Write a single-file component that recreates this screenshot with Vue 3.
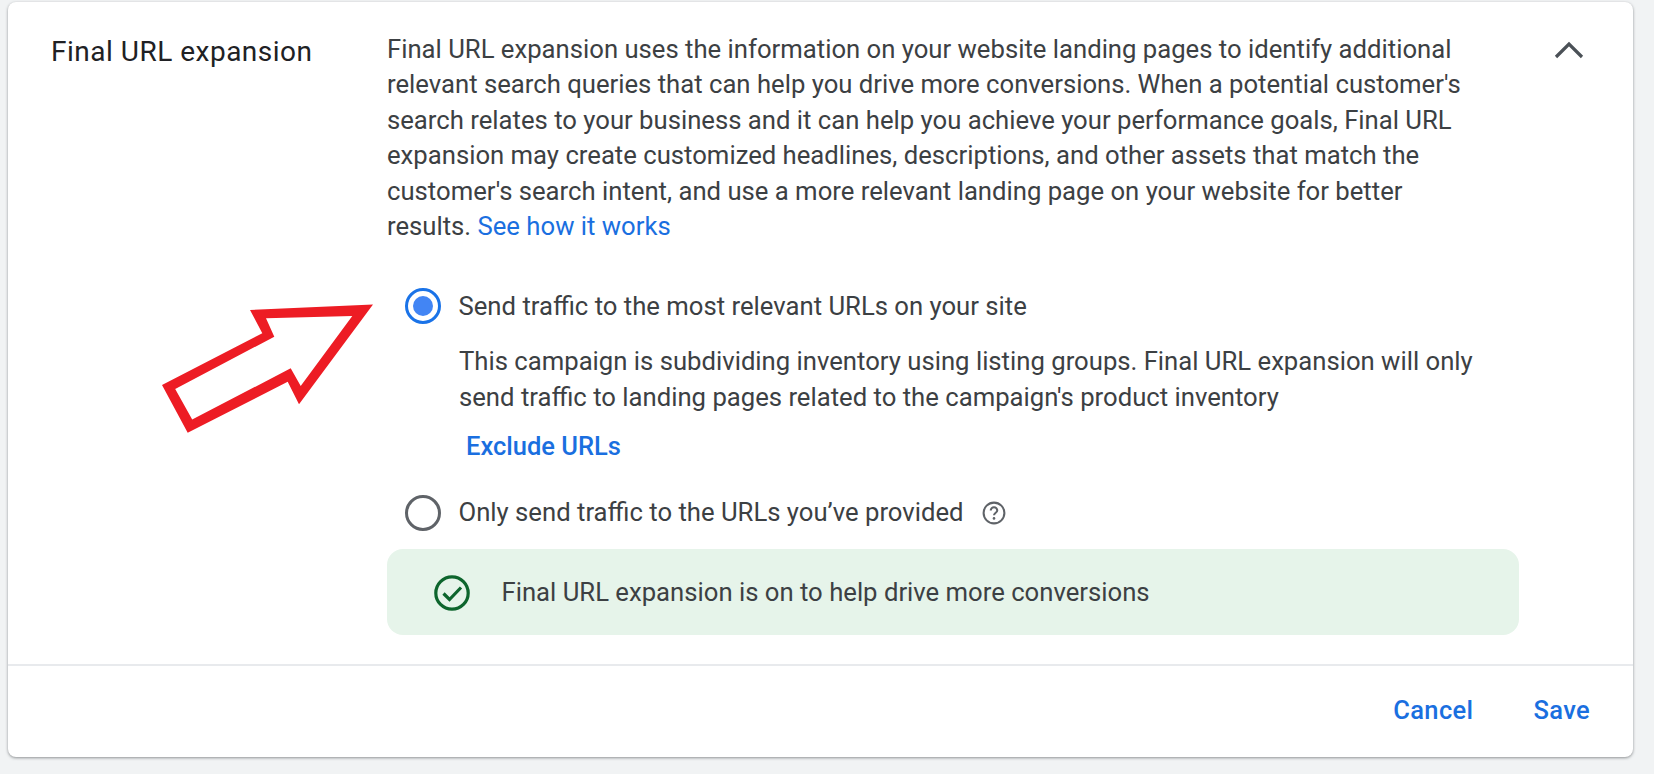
<script setup>
const intro = "Final URL expansion uses the information on your website landing pages to identify additional relevant search queries that can help you drive more conversions. When a potential customer's search relates to your business and it can help you achieve your performance goals, Final URL expansion may create customized headlines, descriptions, and other assets that match the customer's search intent, and use a more relevant landing page on your website for better results."
</script>

<template>
  <div class="page">
    <section class="card">
      <div class="body">
        <h2 class="title">Final URL expansion</h2>
        <div class="content">
          <p class="intro">{{ intro }} <a class="link">See how it works</a></p>
          <div class="option first">
            <span class="radio on"><span class="dot"></span></span>
            <span>Send traffic to the most relevant URLs on your site</span>
          </div>
          <p class="sub">This campaign is subdividing inventory using listing groups. Final URL expansion will only send traffic to landing pages related to the campaign's product inventory</p>
          <a class="exclude">Exclude URLs</a>
          <div class="option second">
            <span class="radio"></span>
            <span>Only send traffic to the URLs you’ve provided</span>
            <svg class="help" viewBox="0 0 24 24" width="26" height="26" fill="none">
              <circle cx="12" cy="12" r="9.6" stroke="#5f6368" stroke-width="1.9" />
              <path d="M9 9.7a3 3 0 0 1 6 0c0 2-3 2.2-3 4.4" stroke="#5f6368" stroke-width="1.9" />
              <circle cx="12" cy="17" r="1.2" fill="#5f6368" />
            </svg>
          </div>
          <div class="notice">
            <svg class="check" viewBox="0 0 36 36" width="36" height="36" fill="none">
              <circle cx="18" cy="18" r="16.200" stroke="#0d652d" stroke-width="3.2" />
              <path d="M9.500 18.500l6 6L27 12.500" stroke="#0d652d" stroke-width="3.2" />
            </svg>
            <span>Final URL expansion is on to help drive more conversions</span>
          </div>
        </div>
        <svg class="chevron" viewBox="0 0 30 18" width="30" height="18" fill="none">
          <path d="M2 16L15 3l13 13" stroke="#4b5157" stroke-width="3.2" />
        </svg>
      </div>
      <footer class="footer">
        <a class="action">Cancel</a>
        <a class="action">Save</a>
      </footer>
      <svg class="arrow" viewBox="0 0 240 150" width="240" height="150">
        <path fill="#ed1c24" fill-rule="evenodd" d="M213 4.500L90 10l12.300 23.300L2 85l25.700 47.800L127.700 81.700 139 104.300ZM192.300 16L106 18.300l8.300 18.400L15.200 89l17 30.500L130.700 68.300 140.700 86Z" />
      </svg>
    </section>
  </div>
</template>

<style>
html, body { margin: 0; background: #f1f3f4; }
</style>

<style scoped>
.page {
  height: 774px;
  padding: 2px 21px 17px 8px;
  box-sizing: border-box;
  background: #f1f3f4;
  font-family: Roboto, "Liberation Sans", sans-serif;
  color: #3c4043;
  overflow: hidden;
}
.card {
  position: relative;
  height: 755px;
  display: flex;
  flex-direction: column;
  background: #fff;
  border-radius: 8px;
  box-shadow: 0 1px 3px rgba(60, 64, 67, 0.55);
}
.body {
  flex: 1;
  display: flex;
  align-items: flex-start;
  border-bottom: 2px solid #e8eaed;
}
.title {
  flex: 0 0 379px;
  margin: 32px 0 0;
  padding-left: 43px;
  box-sizing: border-box;
  font-size: 28px;
  letter-spacing: 0.5px;
  line-height: 35px;
  font-weight: 400;
  color: #202124;
}
.content {
  width: 1132px;
  padding-top: 30px;
  font-size: 25.68px;
  line-height: 35.4px;
}
.intro { margin: 0; padding-right: 47px; }
.link { color: #1a6fe0; }
.option {
  display: flex;
  align-items: center;
  height: 36px;
  gap: 17.5px;
}
.first { margin: 44px 0 0 18px; }
.radio {
  flex: none;
  width: 36px;
  height: 36px;
  box-sizing: border-box;
  border: 3px solid #5f6368;
  border-radius: 50%;
  display: flex;
  align-items: center;
  justify-content: center;
}
.radio.on { border-color: #1a73e8; }
.dot { width: 20px; height: 20px; border-radius: 50%; background: #4285f4; }
.sub { margin: 20px 0 0 72px; width: 1040px; }
.exclude {
  display: block;
  margin: 14px 0 0 79px;
  font-size: 25.5px;
  font-weight: 500;
  color: #1a6fe0;
}
.second { margin: 30px 0 0 18px; }
.notice {
  display: flex;
  align-items: center;
  gap: 31.5px;
  height: 86px;
  margin-top: 18px;
  padding: 2px 0 0 47px;
  box-sizing: border-box;
  border-radius: 16px;
  background: #e6f4ea;
}
.check { flex: none; }
.chevron { margin: 39px 0 0 35px; }
.footer {
  flex: 0 0 91px;
  display: flex;
  justify-content: flex-end;
  align-items: center;
  gap: 60px;
  padding: 0 43px 3px 0;
  box-sizing: border-box;
}
.action { font-size: 25.5px; letter-spacing: 0.35px; font-weight: 500; color: #1a6fe0; }
.arrow {
  position: absolute;
  left: 152px;
  top: 298px;
}
</style>
